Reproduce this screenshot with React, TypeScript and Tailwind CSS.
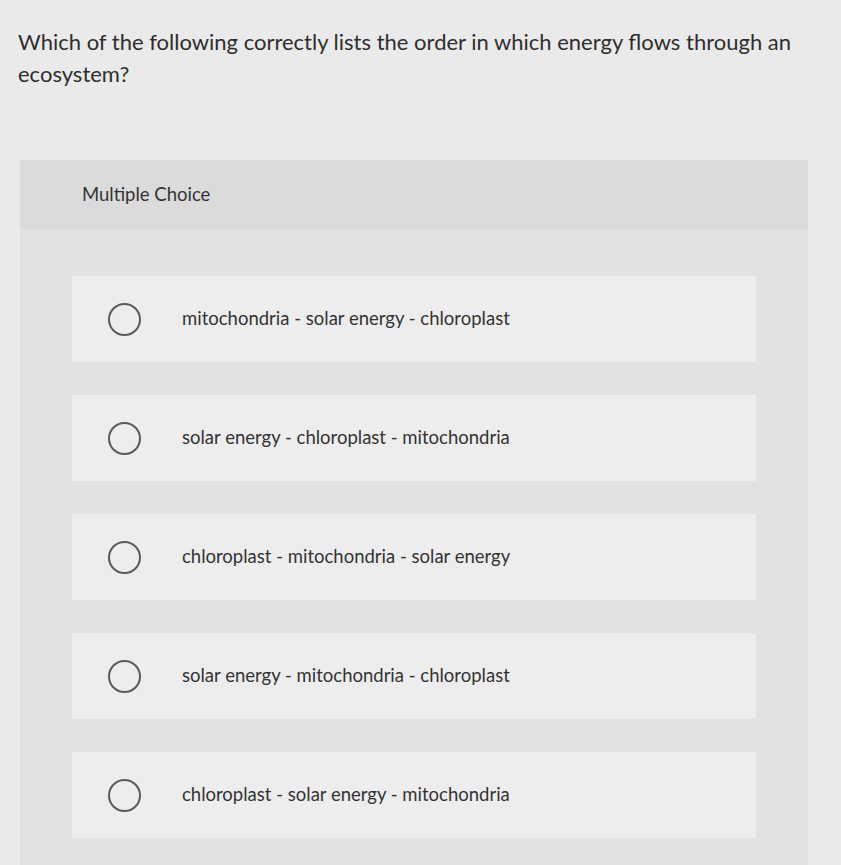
const OPTIONS = [
  "mitochondria - solar energy - chloroplast",
  "solar energy - chloroplast - mitochondria",
  "chloroplast - mitochondria - solar energy",
  "solar energy - mitochondria - chloroplast",
  "chloroplast - solar energy - mitochondria",
];

function Radio() {
  return (
    <span className="block w-[33px] h-[33px] rounded-full border-2 border-[#5a5a5a] shrink-0" />
  );
}

export default function App() {
  return (
    <div className="min-h-screen bg-[#eaeaea] text-[#2e2e2e] font-['Lato','Liberation_Sans',sans-serif] overflow-hidden">
      {/* question */}
      <div className="pl-[18px] pr-[30px] pt-[26px] text-[22px] leading-[32px]">
        Which of the following correctly lists the order in which energy flows through an ecosystem?
      </div>

      <div className="mt-[70px] ml-[20px] mr-[33px] bg-[#e2e2e2] pb-[40px]">
        <div className="h-[70px] bg-[#dbdbdb] flex items-center pl-[62px] text-[18.5px] text-[#333]">
          Multiple Choice
        </div>

        <div className="px-[52px] pt-[46px] flex flex-col gap-[33px]">
          {OPTIONS.map((opt) => (
            <div key={opt} className="h-[86px] bg-[#ededed] flex items-center pl-[36px]">
              <Radio />
              <span className="ml-[41px] text-[18.5px] text-[#333]">{opt}</span>
            </div>
          ))}
        </div>
      </div>
    </div>
  );
}
